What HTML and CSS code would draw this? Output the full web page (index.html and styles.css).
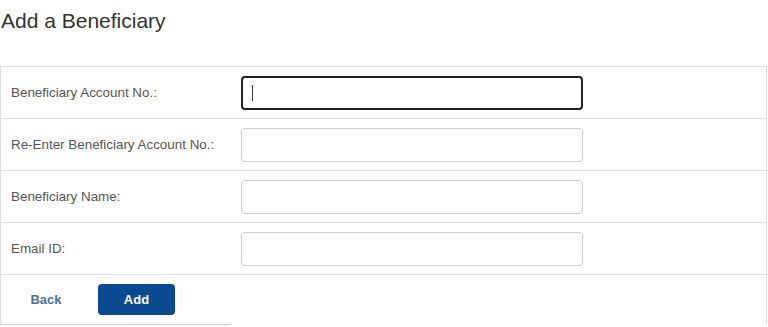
FILE: index.html
```html
<!DOCTYPE html>
<html lang="en">
<head>
    <meta charset="UTF-8">
    <meta name="viewport" content="width=device-width, initial-scale=1.0">
    <title>Add a Beneficiary</title>
    <link rel="stylesheet" href="styles.css">
</head>
<body>
    <h1>Add a Beneficiary</h1>
    <form id="beneficiary-form">
        <div class="row">
            <label for="acc">Beneficiary Account No.:</label>
            <div class="field">
                <input type="text" id="acc" class="focused">
                <span class="caret"></span>
            </div>
        </div>
        <div class="row">
            <label for="acc2">Re-Enter Beneficiary Account No.:</label>
            <div class="field"><input type="text" id="acc2"></div>
        </div>
        <div class="row">
            <label for="name">Beneficiary Name:</label>
            <div class="field"><input type="text" id="name"></div>
        </div>
        <div class="row">
            <label for="email">Email ID:</label>
            <div class="field"><input type="text" id="email"></div>
        </div>
        <div class="actions">
            <button type="button" class="back">Back</button>
            <button type="submit" class="add">Add</button>
        </div>
        <div class="foot-line"></div>
    </form>
</body>
</html>
```

FILE: styles.css
```css
body {
    margin: 0;
    font-family: "Liberation Sans", Arial, sans-serif;
    background: #fff;
}
h1 {
    margin: 0;
    padding: 9px 0 0 1px;
    height: 66px;
    box-sizing: border-box;
    font-size: 21px;
    font-weight: normal;
    color: #333;
}
#beneficiary-form {
    width: 767px;
    border-left: 1px solid #ddd;
    border-right: 1px solid #ddd;
    box-sizing: border-box;
}
.row {
    display: flex;
    align-items: center;
    height: 52px;
    border-top: 1px solid #ddd;
    box-sizing: border-box;
}
.row label {
    width: 240px;
    padding-left: 10px;
    box-sizing: border-box;
    font-size: 13.4px;
    color: #555;
}
.field {
    position: relative;
}
.field input {
    display: block;
    width: 342px;
    height: 34px;
    box-sizing: border-box;
    border: 1px solid #ccc;
    border-radius: 4px;
    outline: none;
    background: #fff;
}
.field input.focused {
    border: 2px solid #222;
}
.caret {
    position: absolute;
    left: 11px;
    top: 9px;
    width: 1px;
    height: 16px;
    background: #333;
}
.actions {
    display: flex;
    align-items: center;
    height: 50px;
    border-top: 1px solid #ddd;
    padding-left: 10px;
    box-sizing: border-box;
}
.back {
    width: 70px;
    padding: 0;
    border: none;
    background: none;
    font-family: inherit;
    font-size: 13px;
    font-weight: bold;
    color: #4a6d9c;
    cursor: pointer;
}
.add {
    width: 77px;
    height: 31px;
    margin-left: 17px;
    border: none;
    border-radius: 4px;
    background: #0b4a91;
    font-family: inherit;
    font-size: 13px;
    font-weight: bold;
    color: #fff;
    cursor: pointer;
}
.foot-line {
    width: 230px;
    border-bottom: 1px solid #ccc;
}
```
